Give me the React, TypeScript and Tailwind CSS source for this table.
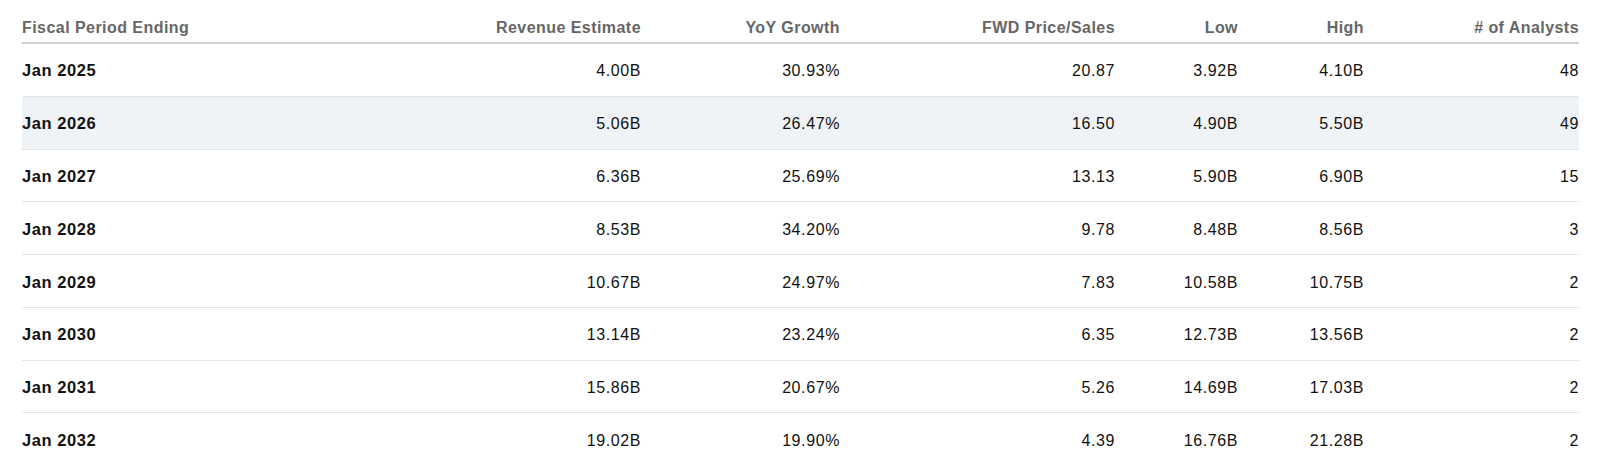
import React from "react";

const rows = [
  ["Jan 2025", "4.00B", "30.93%", "20.87", "3.92B", "4.10B", "48"],
  ["Jan 2026", "5.06B", "26.47%", "16.50", "4.90B", "5.50B", "49"],
  ["Jan 2027", "6.36B", "25.69%", "13.13", "5.90B", "6.90B", "15"],
  ["Jan 2028", "8.53B", "34.20%", "9.78", "8.48B", "8.56B", "3"],
  ["Jan 2029", "10.67B", "24.97%", "7.83", "10.58B", "10.75B", "2"],
  ["Jan 2030", "13.14B", "23.24%", "6.35", "12.73B", "13.56B", "2"],
  ["Jan 2031", "15.86B", "20.67%", "5.26", "14.69B", "17.03B", "2"],
  ["Jan 2032", "19.02B", "19.90%", "4.39", "16.76B", "21.28B", "2"],
];

const headers = [
  "Fiscal Period Ending",
  "Revenue Estimate",
  "YoY Growth",
  "FWD Price/Sales",
  "Low",
  "High",
  "# of Analysts",
];

const widths = ["w-[300px]", "w-[319px]", "w-[199px]", "w-[275px]", "w-[123px]", "w-[126px]", "w-[215px]"];

export default function App() {
  return (
    <div
      className="bg-white pl-[22px] pr-[21px] h-[460px] overflow-hidden"
      style={{ fontFamily: "'Liberation Sans', Arial, sans-serif" }}
    >
      <table className="w-[1557px] table-fixed border-collapse">
        <colgroup>
          {widths.map((w, i) => (
            <col key={i} className={w} />
          ))}
        </colgroup>
        <thead>
          <tr className="border-b-2 border-[#cbd1d5]">
            {headers.map((h, i) => (
              <th
                key={h}
                className={`p-0 pt-[18px] pb-[4px] leading-[20px] text-[16px] font-bold tracking-[0.45px] text-[#666666] ${
                  i === 0 ? "text-left" : "text-right"
                }`}
              >
                {h}
              </th>
            ))}
          </tr>
        </thead>
        <tbody>
          {rows.map((r, ri) => (
            <tr
              key={r[0]}
              className={`border-b border-[#e3e6e9] ${ri === 1 ? "bg-[#f0f3f6]" : "bg-white"}`}
            >
              {r.map((c, ci) => (
                <td
                  key={ci}
                  className={`p-0 leading-[20px] text-[#111111] ${
                    ci === 0
                      ? "pt-[16.4px] pb-[15.4px] text-left font-bold text-[16.5px] tracking-[0.55px]"
                      : "pt-[17.4px] pb-[14.4px] text-right font-normal text-[16px] tracking-[0.6px]"
                  }`}
                >
                  {c}
                </td>
              ))}
            </tr>
          ))}
        </tbody>
      </table>
    </div>
  );
}
